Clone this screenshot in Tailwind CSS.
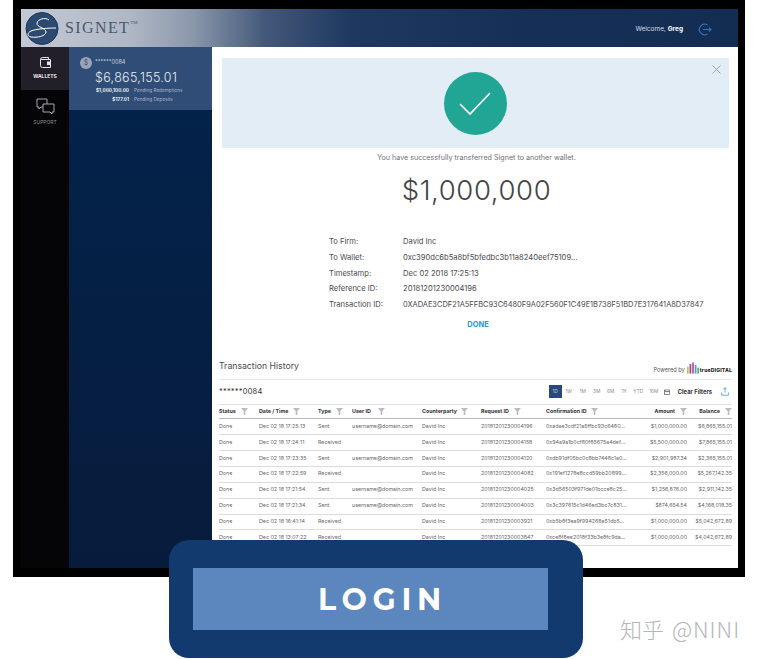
<!DOCTYPE html>
<html>
<head>
<meta charset="utf-8">
<script src="https://cdn.jsdelivr.net/npm/@tailwindcss/browser@4"></script>
</head>
<body class="bg-white m-0">
<div class="relative w-[758px] h-[659px] overflow-hidden bg-white font-['Inter','Liberation_Sans',sans-serif]">
  <!-- device frame -->
  <div class="ml-[13px] w-[732px] h-[577px] bg-black pt-[9px] pl-[8px] pr-[7px] pb-[9px] flex flex-col">
    <!-- header -->
    <header class="h-[38px] shrink-0 flex items-center bg-[linear-gradient(90deg,#c3c9d3_0%,#b0b8c5_15%,#8a97ab_24%,#44597a_34%,#1e3860_46%,#152f57_70%,#132d52_100%)] pl-[4px] pr-[26px]">
      <svg class="w-[34px] h-[35px] shrink-0" viewBox="0 0 34 35">
        <circle cx="17" cy="17.5" r="16" fill="#2c4a70" stroke="#1d3558" stroke-width="1"/>
        <path d="M24 9C20 6 13 8 12 12c-1 4 9 5 9 9 0 4-9 6-15 5-4-1-4-4 0-6 5-2 16-3 25-3" fill="none" stroke="#fff" stroke-width="1"/>
      </svg>
      <span class="ml-[6px] text-[16px] tracking-[1.4px] text-[#48586f] font-['Liberation_Serif',serif] leading-none">SIGNET<sup class="text-[5px] align-super tracking-normal">TM</sup></span>
      <span class="ml-auto pt-[3px] text-[6.5px] text-[#d5dde8]">Welcome, <b class="font-bold text-white">Greg</b></span>
      <svg class="ml-[14px] mt-[2px] w-[15px] h-[15px]" viewBox="0 0 15 15" fill="none" stroke="#2a78c0" stroke-width="1.1">
        <path d="M10.5 3A5.3 5.3 0 1 0 10.5 12"/><path d="M6 7.5h8M12 5.5l2 2-2 2"/>
      </svg>
    </header>
    <div class="flex flex-1 min-h-0">
      <!-- nav rail -->
      <nav class="w-[48px] shrink-0 bg-[#050507] flex flex-col">
        <div class="h-[43px] bg-[#231f29] flex flex-col items-center pt-[9px]">
          <svg class="w-[13px] h-[13px]" viewBox="0 0 13 13" fill="none" stroke="#e6e6ea" stroke-width="1">
            <path d="M1.5 3.5a2 2 0 0 1 2-2h6v2M1.5 3.5v6a2 2 0 0 0 2 2h8v-8h-10z"/><rect x="8.5" y="6" width="3" height="2.6" fill="#e6e6ea"/>
          </svg>
          <span class="mt-[3px] text-[5px] font-semibold text-white leading-[8px]">WALLETS</span>
        </div>
        <div class="flex flex-col items-center pt-[8px]">
          <svg class="w-[19px] h-[17px]" viewBox="0 0 19 17" fill="none" stroke="#a8a8ae" stroke-width="1">
            <path d="M1 1h10v8H5l-2 2V9H1z"/><path d="M7 6h11v8h-2v2l-2-2H7z" fill="#050507"/>
          </svg>
          <span class="mt-[3px] text-[5px] text-[#8d8d94] leading-[8px]">SUPPORT</span>
        </div>
      </nav>
      <!-- wallet panel -->
      <aside class="w-[143px] shrink-0 bg-[linear-gradient(180deg,#03234c_0%,#071c3c_100%)]">
        <div class="h-[63px] bg-[#2f4d76] pt-[10px] pl-[11px] relative">
          <div class="flex items-center gap-[3px]">
            <span class="w-[12px] h-[12px] rounded-full bg-[#99a5b6] text-[#3e5678] text-[7px] flex items-center justify-center">$</span>
            <span class="text-[5.5px] text-[#c9d2df] leading-none">******0084</span>
          </div>
          <div class="ml-[15px] mt-[1px] text-[12.5px] tracking-[0.3px] text-[#e8edf4] leading-[16px] font-light">$6,865,155.01</div>
          <div class="flex text-[4.7px] leading-[8.5px]">
            <div class="w-[49px] text-right font-bold text-[#e8edf4] flex flex-col"><span>$1,000,100.00</span><span>$177.01</span></div>
            <div class="ml-[5px] text-[#a9b8cc] flex flex-col"><span>Pending Redemptions</span><span>Pending Deposits</span></div>
          </div>
        </div>
      </aside>
      <!-- main -->
      <main class="flex-1 min-w-0 bg-white pt-[11px] overflow-hidden">
        <div class="relative ml-[10px] mr-[9px] h-[90px] bg-[#e2edf5] flex items-center justify-center">
          <div class="w-[63px] h-[63px] rounded-full bg-[#21a696] flex items-center justify-center -ml-[1px] mt-[1px]">
            <svg class="w-[32px] h-[24px]" viewBox="0 0 32 24" fill="none" stroke="#fff" stroke-width="1.7"><path d="M1 12l10 10L31 1"/></svg>
          </div>
          <svg class="absolute top-[7px] right-[8px] w-[9px] h-[9px]" viewBox="0 0 9 9" stroke="#8794a2" stroke-width="0.8"><path d="M.5.5l8 8M8.5.5l-8 8"/></svg>
        </div>
        <p class="mt-[4px] text-center text-[7.15px] leading-[11px] text-[#6f6f73] pl-[3px]">You have successfully transferred Signet to another wallet.</p>
        <p class="mt-[9px] text-center text-[27.5px] leading-[36px] text-[#444446] font-light tracking-[0.6px] pl-[3px]">$1,000,000</p>
        <dl class="mt-[26px] ml-[117px] text-[7.6px] text-[#4a4a4e] leading-[15.8px]">
          <div class="flex"><dt class="w-[74px]">To Firm:</dt><dd>David Inc</dd></div>
          <div class="flex"><dt class="w-[74px]">To Wallet:</dt><dd>0xc390dc6b5a8bf5bfedbc3b11a8240eef75109...</dd></div>
          <div class="flex"><dt class="w-[74px]">Timestamp:</dt><dd>Dec 02 2018 17:25:13</dd></div>
          <div class="flex"><dt class="w-[74px]">Reference ID:</dt><dd>20181201230004196</dd></div>
          <div class="flex"><dt class="w-[74px]">Transaction ID:</dt><dd class="whitespace-nowrap text-[7.45px]">0XADAE3CDF21A5FFBC93C6480F9A02F560F1C49E1B738F51BD7E317641A8D37847</dd></div>
        </dl>
        <p class="mt-[6px] text-center text-[7.5px] font-bold text-[#2b96d8] leading-[12px] pl-[6px]">DONE</p>

        <section class="mt-[31px] pl-[7px] pr-[6px]">
          <div class="flex items-end h-[18px] pb-[1px] border-b border-[#e6e6e8]">
            <span class="text-[8.7px] text-[#4a4a4e] leading-[13px] pb-[5px]">Transaction History</span>
            <span class="ml-auto text-[5.6px] text-[#555] pb-[4px]">Powered by</span>
            <div class="ml-[2px] flex items-end pb-[4px]">
              <svg class="w-[12px] h-[12px]" viewBox="0 0 14 13">
                <rect x="0" y="5" width="2" height="8" fill="#e3b23c"/><rect x="3" y="2" width="2" height="11" fill="#7a4ea3"/><rect x="6" y="0" width="2" height="13" fill="#c24f8a"/><rect x="9" y="3" width="2" height="10" fill="#4f9ad0"/><rect x="12" y="6" width="2" height="7" fill="#55b08a"/>
              </svg>
              <span class="ml-[1px] text-[5px] font-extrabold text-[#222] tracking-[0.2px] leading-[7px]">trueDIGITAL</span>
            </div>
          </div>
          <div class="flex items-center h-[25px] border-b border-[#e2e2e4]">
            <span class="text-[7.5px] text-[#333] tracking-[0.2px]">******0084</span>
            <div class="ml-auto flex items-center text-[4.8px] text-[#8c8c90]">
              <span class="w-[13px] h-[13px] bg-[#28497a] text-[#c3d0e2] flex items-center justify-center">1D</span>
              <span class="w-[14px] text-center">1W</span>
              <span class="w-[14px] text-center">1M</span>
              <span class="w-[14px] text-center">3M</span>
              <span class="w-[14px] text-center">6M</span>
              <span class="w-[13px] text-center">1Y</span>
              <span class="w-[15px] text-center">YTD</span>
              <span class="w-[16px] text-center">16M</span>
              <svg class="w-[6px] h-[6px] ml-[2px]" viewBox="0 0 6 6" fill="none" stroke="#555" stroke-width="0.7"><rect x=".5" y="1" width="5" height="4.5"/><path d="M.5 2.5h5"/></svg>
              <span class="ml-[8px] text-[5.8px] font-bold text-[#333]">Clear Filters</span>
              <svg class="ml-[9px] mr-[3px] w-[8px] h-[9px]" viewBox="0 0 8 9" fill="none" stroke="#3d9ad6" stroke-width="0.8"><path d="M4 5.5V.8M2.3 2.3L4 .6l1.7 1.7M.6 5.5v2.7h6.8V5.5"/></svg>
            </div>
          </div>
          <table class="w-[513px] table-fixed border-collapse text-[5.3px] text-[#66666a]">
            <colgroup>
              <col class="w-[40px]"><col class="w-[59px]"><col class="w-[34px]"><col class="w-[70px]"><col class="w-[59px]"><col class="w-[65px]"><col class="w-[96px]"><col class="w-[45px]"><col class="w-[45px]">
            </colgroup>
            <thead>
              <tr class="h-[14px] border-b-[1.5px] border-[#b9b9bc] text-[#333] font-bold text-left">
                <th class="font-bold"><span class="flex items-center gap-[5px]">Status<svg class="w-[7px] h-[7px]" viewBox="0 0 6 6"><path d="M0 0h6L3.7 2.7V6H2.3V2.7z" fill="#bcbcc0"/></svg></span></th>
                <th class="font-bold"><span class="flex items-center gap-[5px]">Date / Time<svg class="w-[7px] h-[7px]" viewBox="0 0 6 6"><path d="M0 0h6L3.7 2.7V6H2.3V2.7z" fill="#bcbcc0"/></svg></span></th>
                <th class="font-bold"><span class="flex items-center gap-[5px]">Type<svg class="w-[7px] h-[7px]" viewBox="0 0 6 6"><path d="M0 0h6L3.7 2.7V6H2.3V2.7z" fill="#bcbcc0"/></svg></span></th>
                <th class="font-bold"><span class="flex items-center gap-[7px]">User ID<svg class="w-[7px] h-[7px]" viewBox="0 0 6 6"><path d="M0 0h6L3.7 2.7V6H2.3V2.7z" fill="#bcbcc0"/></svg></span></th>
                <th class="font-bold"><span class="flex items-center gap-[4px]">Counterparty<svg class="w-[7px] h-[7px]" viewBox="0 0 6 6"><path d="M0 0h6L3.7 2.7V6H2.3V2.7z" fill="#bcbcc0"/></svg></span></th>
                <th class="font-bold"><span class="flex items-center gap-[5px]">Request ID<svg class="w-[7px] h-[7px]" viewBox="0 0 6 6"><path d="M0 0h6L3.7 2.7V6H2.3V2.7z" fill="#bcbcc0"/></svg></span></th>
                <th class="font-bold"><span class="flex items-center gap-[4px]">Confirmation ID<svg class="w-[7px] h-[7px]" viewBox="0 0 6 6"><path d="M0 0h6L3.7 2.7V6H2.3V2.7z" fill="#bcbcc0"/></svg></span></th>
                <th class="font-bold"><span class="flex items-center justify-end gap-[5px]">Amount<svg class="w-[7px] h-[7px]" viewBox="0 0 6 6"><path d="M0 0h6L3.7 2.7V6H2.3V2.7z" fill="#bcbcc0"/></svg></span></th>
                <th class="font-bold"><span class="flex items-center justify-end gap-[5px]">Balance<svg class="w-[7px] h-[7px]" viewBox="0 0 6 6"><path d="M0 0h6L3.7 2.7V6H2.3V2.7z" fill="#bcbcc0"/></svg></span></th>
              </tr>
            </thead>
            <tbody>
              <tr class="h-[15.85px] border-b border-[#dcdcde]"><td>Done</td><td>Dec 02 18 17:25:13</td><td>Sent</td><td>username@domain.com</td><td>David Inc</td><td>20181201230004196</td><td>0xadae3cdf21a5ffbc93c6480...</td><td class="text-right">$1,000,000.00</td><td class="text-right">$6,865,155.01</td></tr>
              <tr class="h-[15.85px] border-b border-[#dcdcde]"><td>Done</td><td>Dec 02 18 17:24:11</td><td>Received</td><td></td><td>David Inc</td><td>20181201230004158</td><td>0x94a9a1b0cf80f85675a4def...</td><td class="text-right">$5,500,000.00</td><td class="text-right">$7,865,155.01</td></tr>
              <tr class="h-[15.85px] border-b border-[#dcdcde]"><td>Done</td><td>Dec 02 18 17:23:35</td><td>Sent</td><td>username@domain.com</td><td>David Inc</td><td>20181201230004120</td><td>0xdb91df05bc0c8bb7448c1a0...</td><td class="text-right">$2,901,987.34</td><td class="text-right">$2,365,155.01</td></tr>
              <tr class="h-[15.85px] border-b border-[#dcdcde]"><td>Done</td><td>Dec 02 18 17:22:59</td><td>Received</td><td></td><td>David Inc</td><td>20181201230004082</td><td>0x191ef1278e8ccd59bb20899...</td><td class="text-right">$2,356,000.00</td><td class="text-right">$5,267,142.35</td></tr>
              <tr class="h-[15.85px] border-b border-[#dcdcde]"><td>Done</td><td>Dec 02 18 17:21:54</td><td>Sent</td><td>username@domain.com</td><td>David Inc</td><td>20181201230004025</td><td>0x3d56503f971de01bcce8c25...</td><td class="text-right">$1,256,876.00</td><td class="text-right">$2,911,142.35</td></tr>
              <tr class="h-[15.85px] border-b border-[#dcdcde]"><td>Done</td><td>Dec 02 18 17:21:34</td><td>Sent</td><td>username@domain.com</td><td>David Inc</td><td>20181201230004003</td><td>0x3c397615c1d46ed3bc7c831...</td><td class="text-right">$874,654.54</td><td class="text-right">$4,168,018.35</td></tr>
              <tr class="h-[15.85px] border-b border-[#dcdcde]"><td>Done</td><td>Dec 02 18 16:41:14</td><td>Received</td><td></td><td>David Inc</td><td>20181201230003921</td><td>0xb5b8f3ea9f994268a51db5...</td><td class="text-right">$1,000,000.00</td><td class="text-right">$5,042,672.89</td></tr>
              <tr class="h-[15.85px] border-b border-[#dcdcde]"><td>Done</td><td>Dec 02 18 13:07:22</td><td>Received</td><td></td><td>David Inc</td><td>20181201230003847</td><td>0xce8f8ee2018f33b3e8fc9da...</td><td class="text-right">$1,000,000.00</td><td class="text-right">$4,042,672.89</td></tr>
            </tbody>
          </table>
        </section>
      </main>
    </div>
  </div>

  <!-- login overlay -->
  <div class="absolute left-[169px] top-[540px] w-[414px] h-[118px] rounded-[20px] bg-[#133a6f] px-[24px] pt-[28px]">
    <button class="w-[355px] h-[62px] bg-[#5b86be] text-white font-['Montserrat','Lato','Liberation_Sans',sans-serif] font-bold text-[30px] tracking-[5.7px] pl-[24px] flex items-center justify-center">LOGIN</button>
  </div>

  <!-- watermark -->
  <div class="absolute left-[620px] top-[615px] text-[22px] leading-[26px] text-[#b4b6b8] font-['Noto_Sans_CJK_SC','Noto_Sans',sans-serif] font-light whitespace-nowrap">知乎<span class="ml-[8px] tracking-[1px]">@NINI</span></div>
</div>
</body>
</html>
